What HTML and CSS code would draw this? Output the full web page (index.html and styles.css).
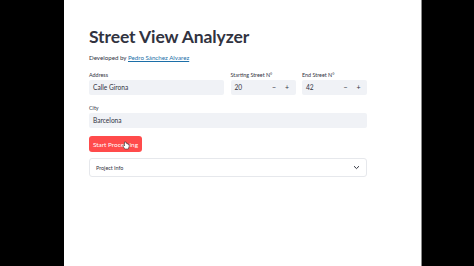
FILE: index.html
```html
<!DOCTYPE html>
<html>
<head>
  <meta charset="utf-8">
  <link rel="stylesheet" href="styles.css">
</head>
<body>
<div class="page">
  <div class="main">
    <h1 class="title">Street View Analyzer</h1>
    <p class="byline">Developed by <a href="#">Pedro Sánchez Alvarez</a></p>

    <div class="row">
      <div class="field wide">
        <label>Address</label>
        <div class="input">Calle Girona</div>
      </div>
      <div class="field">
        <label>Starting Street N°</label>
        <div class="input number">
          <span class="val">20</span>
          <span class="step">−</span>
          <span class="step">+</span>
        </div>
      </div>
      <div class="field">
        <label>End Street N°</label>
        <div class="input number">
          <span class="val">42</span>
          <span class="step">−</span>
          <span class="step">+</span>
        </div>
      </div>
    </div>

    <div class="field">
      <label>City</label>
      <div class="input">Barcelona</div>
    </div>

    <div class="btn-wrap">
      <button class="btn">Start Processing</button>
      <svg class="cursor" width="8" height="9" viewBox="0 0 8 9">
        <path d="M2.5 1 v4 l-1-1 -.8.6 2 3.4 h3.6 l.8-2.5 v-2 h-1 v-.8 h-1 v-.5 h-1 v-1.2 z" fill="#fff" stroke="#333" stroke-width=".6"/>
      </svg>
    </div>

    <div class="expander">
      <span>Project Info</span>
      <svg width="7" height="5" viewBox="0 0 7 5"><path d="M1 1.2 L3.5 3.6 L6 1.2" fill="none" stroke="#31333f" stroke-width="1"/></svg>
    </div>
  </div>
</div>
</body>
</html>
```

FILE: styles.css
```css
* { margin: 0; padding: 0; box-sizing: border-box }

body {
  background: #000;
  font-family: "Lato", "Noto Sans", sans-serif;
  color: #31333f;
  overflow: hidden;
}

.page {
  margin-left: 64px;
  width: 358px;
  height: 266px;
  background: #fff;
  border-right: 1px solid #8a8a8a;
  padding: 26px 0 0 25px;
}

.main { width: 278px }

.title {
  font-size: 17.5px;
  font-weight: 700;
  letter-spacing: -0.1px;
  line-height: 22px;
}

.byline {
  margin-top: 6px;
  font-size: 6.2px;
  line-height: 8px;
}

.byline a { color: #1c6fa8 }

.row {
  display: flex;
  gap: 6.5px;
  margin-top: 9px;
}

.row .field { width: 65px }
.row .field.wide { width: 135px }

.field label {
  display: block;
  font-size: 5.4px;
  line-height: 8px;
  height: 8px;
  margin-bottom: 1px;
}

.main > .field { margin-top: 9px }

.input {
  height: 15px;
  background: #f0f2f6;
  border-radius: 2px;
  font-size: 6.6px;
  line-height: 15px;
  padding-left: 4px;
}

.number {
  display: flex;
  align-items: center;
  padding-right: 2px;
}

.number .val { flex: 1 }

.step {
  width: 13px;
  text-align: center;
  font-size: 7px;
}

.btn-wrap {
  position: relative;
  margin-top: 8px;
}

.btn {
  display: block;
  height: 16px;
  padding: 0 4px;
  background: #ff4b4b;
  border: none;
  border-radius: 3px;
  color: #fff;
  font-family: inherit;
  font-weight: 400;
  font-size: 6.4px;
}

.cursor {
  position: absolute;
  left: 33px;
  top: 5px;
}

.expander {
  margin-top: 6px;
  height: 19px;
  border: 1px solid #e6e8ec;
  border-radius: 3px;
  display: flex;
  align-items: center;
  justify-content: space-between;
  padding: 0 6px 0 6px;
  font-size: 5.4px;
}
```
